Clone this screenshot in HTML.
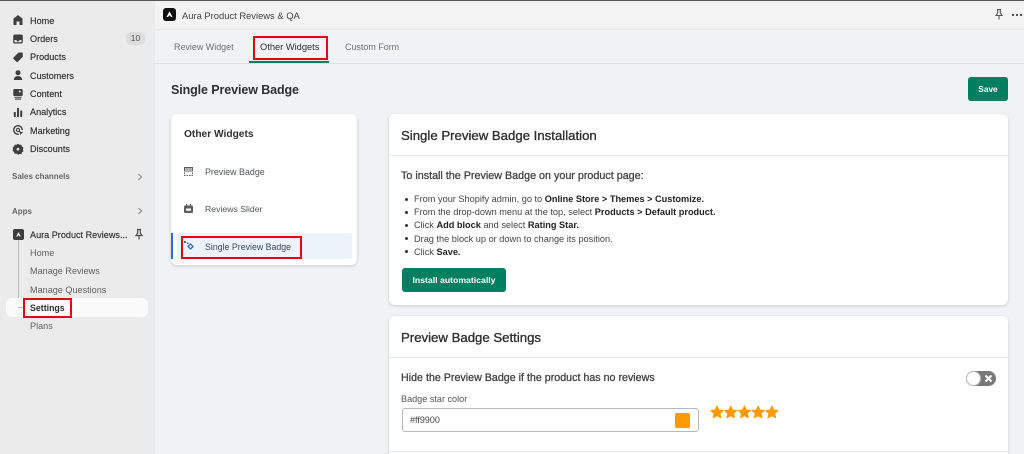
<!DOCTYPE html>
<html style="overflow:hidden;height:454px"><head><meta charset="utf-8">
<style>
*{box-sizing:border-box}
html,body{margin:0;padding:0}
body{width:1024px;height:454px;overflow:hidden;position:relative;background:#f1f2f4;font-family:"Liberation Sans",sans-serif;color:#303030}
#w{position:absolute;left:0;top:0;width:1024px;height:454px;overflow:hidden;background:#f1f2f4;filter:blur(.3px)}
.a{position:absolute;white-space:nowrap}
.n{font-size:9.1px;line-height:12px;left:30px;color:#303030;-webkit-text-stroke:.15px #303030}
.s{font-size:9.1px;line-height:12px;left:30px;color:#616161}
.i{position:absolute;left:12px;width:12px;height:12px;fill:#3f3f3f}
.card{position:absolute;background:#fff;border-radius:6px;box-shadow:0 1px 3px rgba(0,0,0,.16)}
.r{position:absolute;border:2px solid #e30613;background:transparent}
.li{font-size:9.2px;line-height:13px;left:414px;color:#444}
.li b{color:#222}
.dot{position:absolute;left:405px;width:3px;height:3px;border-radius:50%;background:#333}
.h{font-size:13.2px;line-height:17px;color:#303030;-webkit-text-stroke:.35px #303030}
.t{font-size:8.9px;line-height:12px;color:#50545a}
</style></head><body><div id="w">
<div class="a" style="left:0;top:0;width:1024px;height:1px;background:#555;z-index:5"></div>
<div class="a" style="left:0;top:0;width:155px;height:454px;background:#ebebeb"></div>
<svg class="i" style="top:14px" viewBox="0 0 12 12"><path d="M6 1 1.500 4.600V11h3V7.500h3V11h3V4.600z"/></svg>
<svg class="i" style="top:33px" viewBox="0 0 12 12"><path d="M3 1.500h6A1.800 1.800 0 0 1 10.800 3.300v5.400A1.800 1.800 0 0 1 9 10.500H3A1.800 1.800 0 0 1 1.200 8.700V3.300A1.800 1.800 0 0 1 3 1.500zM2.500 7v1.500c0 .5.300.8.800.8h5.400c.5 0 .8-.3.800-.8V7H7.500a1.500 1.500 0 0 1-3 0z"/></svg>
<svg class="i" style="top:51px" viewBox="0 0 12 12"><path d="M6.500 1.500H10a.8.800 0 0 1 .8.800v3.500L5.800 10.800a1 1 0 0 1-1.400 0L1.500 7.900a1 1 0 0 1 0-1.400z"/></svg>
<svg class="i" style="top:69px" viewBox="0 0 12 12"><circle cx="6" cy="3.700" r="2.500"/><path d="M1.800 11c0-2.500 1.900-4 4.200-4s4.200 1.500 4.200 4z"/></svg>
<svg class="i" style="top:88px" viewBox="0 0 12 12"><path d="M2.500 1h7A1.200 1.200 0 0 1 10.700 2.200V7a1.200 1.200 0 0 1-1.200 1.200h-7A1.200 1.200 0 0 1 1.300 7V2.200A1.200 1.200 0 0 1 2.500 1zM2.500 9.200h7v1h-7zM3 10.800h6v.8H3z"/><circle cx="7.800" cy="3.500" r="1" fill="#ebebeb"/></svg>
<svg class="i" style="top:106px" viewBox="0 0 12 12"><rect x="1.800" y="6" width="2" height="5" rx=".5"/><rect x="5" y="2" width="2" height="9" rx=".5"/><rect x="8.200" y="4.500" width="2" height="6.500" rx=".5"/></svg>
<svg class="i" style="top:124px" viewBox="0 0 12 12"><path d="M6 1a5 5 0 0 0 0 10 5 5 0 0 0 1-.1l-.4-1.300H6a3.600 3.600 0 1 1 3.600-3.600h1.400A5 5 0 0 0 6 1z"/><circle cx="6" cy="6" r="1.600" fill="none" stroke="#3f3f3f" stroke-width="1.100"/><path d="M7 7l4.500 1.600-2 .8-.8 2z"/></svg>
<svg class="i" style="top:143px" viewBox="0 0 12 12"><path d="M6 .7l1.500 1.100 1.900-.1.600 1.800 1.500 1.100-.6 1.800.6 1.800-1.500 1.100-.6 1.800-1.900-.1L6 11.700l-1.500-1.100-1.900.1L2 8.900.5 7.800 1.100 6 .5 4.600 2 3.500l.6-1.800 1.900.1z"/><circle cx="6" cy="6.200" r="1.300" fill="#ebebeb"/></svg>
<div class="a n" style="top:15px">Home</div>
<div class="a n" style="top:33px">Orders</div>
<div class="a" style="left:126px;top:32px;width:19px;height:13px;background:#dcdcdc;border-radius:5px;font-size:8.5px;line-height:13px;text-align:center;color:#555">10</div>
<div class="a n" style="top:51px">Products</div>
<div class="a n" style="top:70px">Customers</div>
<div class="a n" style="top:88px">Content</div>
<div class="a n" style="top:106px">Analytics</div>
<div class="a n" style="top:125px">Marketing</div>
<div class="a n" style="top:143px">Discounts</div>
<div class="a" style="left:12px;top:171px;font-size:8px;line-height:12px;font-weight:bold;color:#666">Sales channels</div>
<svg class="a" style="left:137px;top:173px" width="6" height="8" viewBox="0 0 6 8"><path d="M1.500 1 4.500 4 1.500 7" fill="none" stroke="#888" stroke-width="1"/></svg>
<div class="a" style="left:12px;top:206px;font-size:8px;line-height:12px;font-weight:bold;color:#666">Apps</div>
<svg class="a" style="left:137px;top:207px" width="6" height="8" viewBox="0 0 6 8"><path d="M1.500 1 4.500 4 1.500 7" fill="none" stroke="#888" stroke-width="1"/></svg>
<div class="a" style="left:13px;top:229px;width:11px;height:11px;background:#3d3d3d;border-radius:2px"></div>
<svg class="a" style="left:13px;top:229px" width="11" height="11" viewBox="0 0 11 11"><path d="M5.500 3 7.800 7.500H6.500L5.500 6 4.500 7.500H3.200z" fill="#fff"/></svg>
<div class="a n" style="top:229px;color:#303030">Aura Product Reviews...</div>
<svg class="a" style="left:133px;top:228px" width="12" height="13" viewBox="0 0 12 13"><path d="M4 1.500h4M4.700 1.500v3.500L3 7.500h6L7.300 5V1.500M6 7.500V11.500" fill="none" stroke="#4a4a4a" stroke-width="1.200"/></svg>
<div class="a" style="left:18px;top:240px;width:1px;height:67px;background:#bbb"></div>
<div class="a" style="left:6px;top:298px;width:142px;height:19px;background:#fafafa;border-radius:6px"></div>
<div class="a" style="left:18px;top:307px;width:6px;height:1px;background:#bbb"></div>
<div class="a s" style="top:247px">Home</div>
<div class="a s" style="top:265px">Manage Reviews</div>
<div class="a s" style="top:284px">Manage Questions</div>
<div class="a" style="left:30px;top:302px;font-size:8.800px;line-height:12px;font-weight:bold;color:#303030">Settings</div>
<div class="a s" style="top:320px">Plans</div>
<div class="r" style="left:23px;top:298px;width:49px;height:20px"></div>

<div class="a" style="left:155px;top:1px;width:869px;height:29px;background:#f3f3f4;border-bottom:1px solid #e9e9ea"></div>
<div class="a" style="left:163px;top:8px;width:13px;height:13px;background:#111;border-radius:3px"></div>
<svg class="a" style="left:163px;top:8px" width="13" height="13" viewBox="0 0 13 13"><path d="M6.500 3.200 9.500 9H8L6.500 7.200 5 9H3.500z" fill="#fff"/></svg>
<div class="a" style="left:182px;top:9px;font-size:9.400px;line-height:13px;color:#444">Aura Product Reviews &amp; QA</div>
<svg class="a" style="left:993px;top:8px" width="12" height="13" viewBox="0 0 12 13"><path d="M4 1.500h4M4.700 1.500v3.500L3 7.500h6L7.300 5V1.500M6 7.500V11.500" fill="none" stroke="#555" stroke-width="1.100"/></svg>
<div class="a" style="left:1012px;top:14px;width:10px;height:2px;background:repeating-linear-gradient(90deg,#555 0 2px,transparent 2px 4px)"></div>
<div class="a" style="left:155px;top:63px;width:869px;height:1px;background:#dfe0e2"></div>
<div class="a" style="left:174px;top:41px;font-size:8.950px;line-height:13px;color:#6d7175">Review Widget</div>
<div class="a" style="left:260px;top:41px;font-size:9.300px;line-height:13px;color:#303030">Other Widgets</div>
<div class="a" style="left:345px;top:41px;font-size:8.950px;line-height:13px;color:#6d7175">Custom Form</div>
<div class="r" style="left:253px;top:36px;width:75px;height:24px"></div>
<div class="a" style="left:249px;top:61px;width:80px;height:2px;background:#008060"></div>
<div class="a" style="left:171px;top:81px;font-size:12.500px;letter-spacing:-.1px;line-height:18px;font-weight:bold;color:#303030">Single Preview Badge</div>
<div class="a" style="left:968px;top:77px;width:40px;height:24px;background:#008060;border-radius:3px;color:#fff;font-size:8.300px;font-weight:bold;line-height:25px;text-align:center">Save</div>

<div class="card" style="left:171px;top:114px;width:186px;height:151px"></div>
<div class="a" style="left:184px;top:128px;font-size:10.200px;line-height:14px;font-weight:bold;color:#303030">Other Widgets</div>
<svg class="a" style="left:183px;top:166px" width="11" height="11" viewBox="0 0 11 11"><path d="M1.500 1.500h8v3.500h-8z M1.500 3h8" fill="none" stroke="#5c5f62" stroke-width="1"/><path d="M1.500 6.500v3h8v-3" fill="none" stroke="#5c5f62" stroke-width="1" stroke-dasharray="1.500 1"/></svg>
<div class="a t" style="left:205px;top:166px">Preview Badge</div>
<svg class="a" style="left:183px;top:203px" width="11" height="11" viewBox="0 0 11 11"><path d="M2 2.500h7a1 1 0 0 1 1 1V9a1 1 0 0 1-1 1H2a1 1 0 0 1-1-1V3.500a1 1 0 0 1 1-1zM3 1h1.200v2H3zM6.800 1H8v2H6.800z" fill="#5c5f62"/><rect x="3" y="5.500" width="5" height="2.200" fill="#fff"/></svg>
<div class="a t" style="left:205px;top:203px;font-size:8.700px">Reviews Slider</div>
<div class="a" style="left:177px;top:233px;width:175px;height:26px;background:#edf3fb;border-radius:2px"></div>
<div class="a" style="left:171px;top:233px;width:2px;height:26px;background:#2c6ecb"></div>
<svg class="a" style="left:183px;top:240px" width="12" height="12" viewBox="0 0 12 12"><rect x="1" y="1" width="2" height="2" fill="#2c6ecb"/><rect x="4" y="2.500" width="1.500" height="1.500" fill="#2c6ecb"/><path d="M7.500 4 10 6.500 7.500 9 5 6.500z" fill="none" stroke="#2c6ecb" stroke-width="1.300"/></svg>
<div class="a t" style="left:205px;top:241px;font-size:8.800px;color:#3a4a63">Single Preview Badge</div>
<div class="r" style="left:181px;top:236px;width:121px;height:23px"></div>

<div class="card" style="left:389px;top:114px;width:619px;height:191px"></div>
<div class="a" style="left:389px;top:155px;width:619px;height:1px;background:#e8e9eb"></div>
<div class="a h" style="left:401px;top:127px">Single Preview Badge Installation</div>
<div class="a" style="left:401px;top:169px;font-size:10.750px;line-height:14px;color:#444;-webkit-text-stroke:.3px #444">To install the Preview Badge on your product page:</div>
<div class="dot" style="top:198px"></div><div class="dot" style="top:211px"></div><div class="dot" style="top:224px"></div><div class="dot" style="top:237px"></div><div class="dot" style="top:250px"></div>
<div class="a li" style="top:193px">From your Shopify admin, go to <b>Online Store &gt; Themes &gt; Customize.</b></div>
<div class="a li" style="top:206px">From the drop-down menu at the top, select <b>Products &gt; Default product.</b></div>
<div class="a li" style="top:219px">Click <b>Add block</b> and select <b>Rating Star.</b></div>
<div class="a li" style="top:233px">Drag the block up or down to change its position.</div>
<div class="a li" style="top:246px">Click <b>Save.</b></div>
<div class="a" style="left:402px;top:268px;width:104px;height:24px;background:#008060;border-radius:3px;color:#fff;font-size:8.700px;font-weight:bold;line-height:25px;text-align:center">Install automatically</div>

<div class="card" style="left:389px;top:316px;width:619px;height:150px"></div>
<div class="a" style="left:389px;top:357px;width:619px;height:1px;background:#e8e9eb"></div>
<div class="a" style="left:389px;top:451px;width:619px;height:1px;background:#e8e9eb"></div>
<div class="a h" style="left:401px;top:329px">Preview Badge Settings</div>
<div class="a" style="left:401px;top:371px;font-size:10.700px;line-height:14px;color:#444;-webkit-text-stroke:.3px #444">Hide the Preview Badge if the product has no reviews</div>
<div class="a" style="left:401px;top:393px;font-size:9.100px;line-height:12px;color:#555">Badge star color</div>
<div class="a" style="left:402px;top:408px;width:297px;height:24px;background:#fff;border:1px solid #b5b8bc;border-radius:3px"></div>
<div class="a" style="left:410px;top:415px;font-size:9px;line-height:11px;color:#444">#ff9900</div>
<div class="a" style="left:675px;top:413px;width:15px;height:15px;background:#ff9900;border-radius:2px"></div>
<svg class="a" style="left:710px;top:405px" width="69" height="14" viewBox="0 0 69 14" fill="#ff9900" stroke="#ff9900" stroke-width=".5">
<path d="M7 .5l2 4.300 4.600.6-3.400 3.200.9 4.600L7 11l-4.100 2.200.9-4.600L.4 5.400 5 4.800z"/>
<path transform="translate(13.700)" d="M7 .5l2 4.300 4.600.6-3.400 3.200.9 4.600L7 11l-4.100 2.200.9-4.600L.4 5.400 5 4.800z"/>
<path transform="translate(27.400)" d="M7 .5l2 4.300 4.600.6-3.400 3.200.9 4.600L7 11l-4.100 2.200.9-4.600L.4 5.400 5 4.800z"/>
<path transform="translate(41.100)" d="M7 .5l2 4.300 4.600.6-3.400 3.200.9 4.600L7 11l-4.100 2.200.9-4.600L.4 5.400 5 4.800z"/>
<path transform="translate(54.800)" d="M7 .5l2 4.300 4.600.6-3.400 3.200.9 4.600L7 11l-4.100 2.200.9-4.600L.4 5.400 5 4.800z"/>
</svg>
<div class="a" style="left:966px;top:371px;width:30px;height:15px;background:#777;border-radius:8px"></div>
<div class="a" style="left:966px;top:371px;width:15px;height:15px;background:#fff;border:1px solid #bbb;border-radius:50%"></div>
<svg class="a" style="left:984px;top:374px" width="9" height="9" viewBox="0 0 9 9"><path d="M1.500 1.500l6 6M7.500 1.500l-6 6" stroke="#fff" stroke-width="2"/></svg>
</div></body></html>
